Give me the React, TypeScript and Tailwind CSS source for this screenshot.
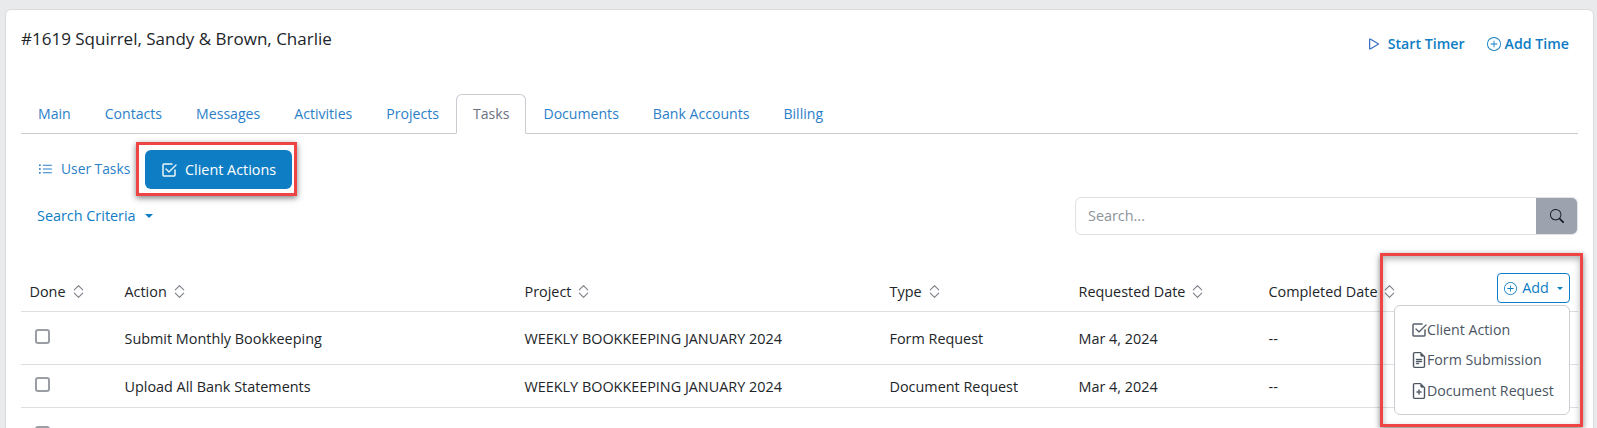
import {
  BsCheck2Square,
  BsChevronExpand,
  BsFileEarmarkPlus,
  BsFileEarmarkText,
  BsListUl,
  BsPlay,
  BsPlusCircle,
  BsSearch,
} from "react-icons/bs"

const tabs = ["Main", "Contacts", "Messages", "Activities", "Projects", "Tasks", "Documents", "Bank Accounts", "Billing"]

const columns = [
  { label: "Done", width: "w-[95px]" },
  { label: "Action", width: "w-[400px]" },
  { label: "Project", width: "w-[365px]" },
  { label: "Type", width: "w-[189px]" },
  { label: "Requested Date", width: "w-[190px]" },
  { label: "Completed Date", width: "w-[118px]" },
]

const rows = [
  { action: "Submit Monthly Bookkeeping", type: "Form Request", height: "h-[53px]" },
  { action: "Upload All Bank Statements", type: "Document Request", height: "h-[43px]" },
]

function Checkbox() {
  return <div className="ml-[5px] h-[15px] w-[15px] rounded-[3px] border-2 border-[#9a9da3] bg-white" />
}

export default function App() {
  return (
    <div className="relative h-[428px] overflow-hidden bg-[#e9eaec] pt-[9px] pl-[5px] pr-[3px] font-['Open_Sans',sans-serif] text-[14.4px] text-[#212529]">
      <div className="h-[500px] rounded-t-md border border-[#d9dbde] bg-white px-[15px]">
        {/* Header */}
        <div className="flex h-[84px] items-start justify-between">
          <h1 className="mt-[17px] text-[17px] leading-6 text-[#212529]">#1619 Squirrel, Sandy &amp; Brown, Charlie</h1>
          <div className="mt-[23px] mr-[9px] flex items-center gap-[22px] text-[14.2px] font-semibold text-[#0e7dc4]">
            <span className="flex items-center gap-[4px]">
              <BsPlay className="h-[20px] w-[20px] text-[#3d6fc4]" />
              Start Timer
            </span>
            <span className="flex items-center gap-[4px]">
              <BsPlusCircle className="h-[14px] w-[14px]" />
              Add Time
            </span>
          </div>
        </div>

        {/* Tabs */}
        <div className="flex h-[40px] border-b border-[#c9cbd1] text-[14.1px]">
          {tabs.map((tab) =>
            tab === "Tasks" ? (
              <div key={tab} className="flex h-[40px] items-center rounded-t-md border border-b-white border-[#c9cbd1] bg-white px-[16px] text-[#6b7280]">
                {tab}
              </div>
            ) : (
              <div key={tab} className="flex h-[39px] items-center border border-transparent px-[16px] text-[#2b7fc9]">
                {tab}
              </div>
            )
          )}
        </div>

        {/* Sub tabs */}
        <div className="mt-[16px] flex h-[39px] items-center">
          <div className="ml-[17px] flex w-[90px] items-center gap-[8px] whitespace-nowrap text-[#2b7fc9]">
            <BsListUl className="h-[15px] w-[15px] shrink-0" />
            <span className="text-[13.8px]">User Tasks</span>
          </div>
          <div className="ml-[17px] flex h-[39px] w-[147px] items-center gap-[8px] rounded-md bg-[#0e7dc4] pl-[16px] text-white">
            <BsCheck2Square className="h-[16px] w-[16px] stroke-[0.4]" />
            <span>Client Actions</span>
          </div>
        </div>

        {/* Search */}
        <div className="mt-[8px] flex h-[38px] items-center justify-between">
          <div className="ml-[16px] flex items-center gap-[9px] font-medium text-[#0e7dc4]">
            Search Criteria
            <span className="h-0 w-0 border-x-[4px] border-t-[4px] border-x-transparent border-t-[#0e7dc4]" />
          </div>
          <div className="flex h-[38px] w-[503px] overflow-hidden rounded-md border border-[#e0e2e6]">
            <div className="flex flex-1 items-center pl-[12px] text-[#8d939c]">Search...</div>
            <div className="flex w-[41px] items-center justify-center bg-[#9ca3af]">
              <BsSearch className="h-[14px] w-[14px] text-[#111827]" />
            </div>
          </div>
        </div>

        {/* Table */}
        <table className="relative mt-[38px] w-full table-fixed border-collapse">
          <thead>
            <tr className="h-[38px] border-b border-[#dcdee1]">
              {columns.map((col) => (
                <th key={col.label} className={`${col.width} pl-[8.5px] text-left font-medium`}>
                  <span className="flex items-center gap-[4px] whitespace-nowrap">
                    {col.label}
                    <BsChevronExpand className="h-[17px] w-[17px] shrink-0 text-[#7d8087]" />
                  </span>
                </th>
              ))}
              <th className="pr-[8px] align-top">
                <div className="ml-auto flex h-[30px] w-[73px] items-center justify-center gap-[5px] rounded-[4px] border border-[#0e7dc4] font-medium text-[#0e7dc4]">
                  <BsPlusCircle className="h-[13px] w-[13px]" />
                  Add
                  <span className="ml-[3px] h-0 w-0 border-x-[3px] border-t-[3px] border-x-transparent border-t-[#0e7dc4]" />
                </div>
              </th>
            </tr>
          </thead>
          <tbody>
            {rows.map((row) => (
              <tr key={row.action} className={`${row.height} border-b border-[#dcdee1]`}>
                <td className="pb-[3px] pl-[9px]">
                  <Checkbox />
                </td>
                <td className="pt-[2px] pl-[8.5px]">{row.action}</td>
                <td className="pt-[2px] pl-[8.5px]">WEEKLY BOOKKEEPING JANUARY 2024</td>
                <td className="pt-[2px] pl-[8.5px]">{row.type}</td>
                <td className="pt-[2px] pl-[8.5px]">Mar 4, 2024</td>
                <td className="pt-[2px] pl-[8.5px]">--</td>
                <td />
              </tr>
            ))}
            <tr className="h-[43px]">
              <td className="pt-[18px] pl-[9px] align-top">
                <Checkbox />
              </td>
            </tr>
          </tbody>
        </table>
      </div>

      {/* Add menu */}
      <div className="absolute top-[305px] left-[1394px] flex h-[110px] w-[176px] flex-col justify-center gap-[8px] rounded-md border border-[#ccced3] bg-white pl-[16px] text-[14.2px] text-[#4b5563]">
        <div className="flex h-[22px] items-center">
          <BsCheck2Square className="h-[16px] w-[16px] shrink-0 stroke-[0.4]" />
          Client Action
        </div>
        <div className="flex h-[22px] items-center">
          <BsFileEarmarkText className="h-[16px] w-[16px] shrink-0 stroke-[0.4]" />
          Form Submission
        </div>
        <div className="mt-[1px] flex h-[22px] items-center">
          <BsFileEarmarkPlus className="h-[16px] w-[16px] shrink-0 stroke-[0.4]" />
          Document Request
        </div>
      </div>

      {/* Red highlight boxes */}
      <div className="absolute top-[142px] left-[136px] h-[54px] w-[161px] border-[3px] border-[#ef4444] shadow-[0_2px_6px_rgba(0,0,0,0.5)]" />
      <div className="absolute top-[253px] left-[1380px] h-[174px] w-[203px] border-[3px] border-[#ef4444] shadow-[0_2px_6px_rgba(0,0,0,0.5),inset_0_3px_6px_rgba(0,0,0,0.3)]" />
    </div>
  )
}
